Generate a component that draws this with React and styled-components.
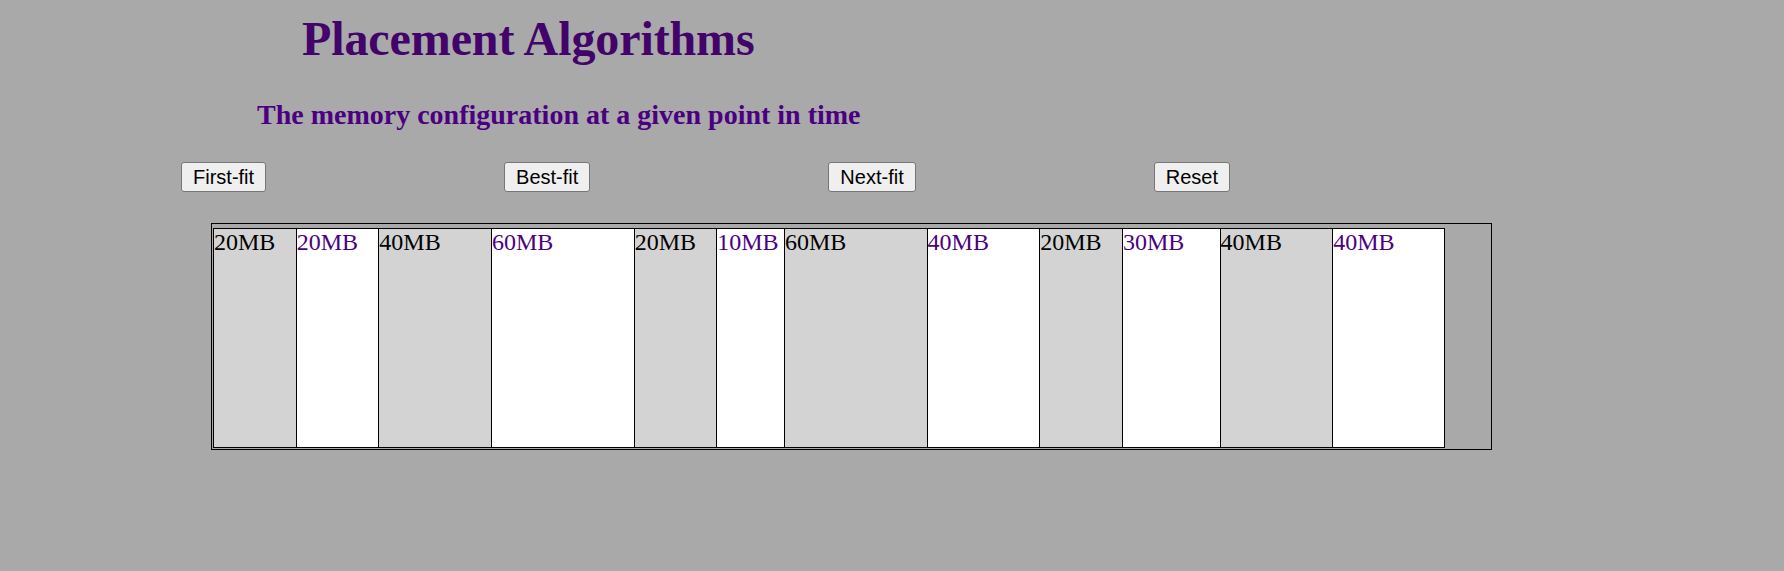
import React from 'react';
import styled, { createGlobalStyle } from 'styled-components';

const blocks = [
    { size: 20, used: true },
    { size: 20, used: false },
    { size: 40, used: true },
    { size: 60, used: false },
    { size: 20, used: true },
    { size: 10, used: false },
    { size: 60, used: true },
    { size: 40, used: false },
    { size: 20, used: true },
    { size: 30, used: false },
    { size: 40, used: true },
    { size: 40, used: false },
];

const algorithms = ['First-fit', 'Best-fit', 'Next-fit', 'Reset'];

const App = () => {
    return (
        <Wrapper>
            <GlobalStyle />
            <Title>Placement Algorithms</Title>
            <Subtitle>The memory configuration at a given point in time</Subtitle>
            <ButtonRow>
                {algorithms.map((name) => (
                    <ActionButton key={name} type="button">{name}</ActionButton>
                ))}
            </ButtonRow>
            <MemoryFrame>
                <MemoryStrip>
                    {blocks.map((block, index) => (
                        <Block key={index} $size={block.size} $used={block.used}>
                            {block.size}MB
                        </Block>
                    ))}
                </MemoryStrip>
            </MemoryFrame>
        </Wrapper>
    );
};

export default App;


const GlobalStyle = createGlobalStyle`
    html, body {
        margin: 0;
        padding: 0;
        background-color: #a9a9a9;
    }
    * {
        box-sizing: border-box;
    }
`;
const Wrapper = styled.main`
    display: flex;
    flex-direction: column;
    align-items: flex-start;
    width: 100%;
    min-height: 571px;
    padding-top: 11px;
    font-family: "Liberation Serif", "Times New Roman", serif;
    background-color: #a9a9a9;
`;
const Title = styled.h1`
    margin: 0 0 0 302px;
    font-size: 48px;
    line-height: 55px;
    font-weight: bold;
    letter-spacing: -0.1px;
    color: #42036a;
`;
const Subtitle = styled.h3`
    margin: 33px 0 0 257px;
    font-size: 28px;
    line-height: 32px;
    font-weight: bold;
    color: #4b0082;
`;
const ButtonRow = styled.div`
    display: flex;
    flex-direction: row;
    align-items: center;
    gap: 238px;
    margin: 31px 0 0 181px;
`;
const ActionButton = styled.button`
    height: 30px;
    padding: 0 11px;
    font-family: Arial, "Liberation Sans", sans-serif;
    font-size: 20px;
    color: #000;
    background-color: #efefef;
    border: 1px solid #767676;
    border-radius: 3px;
    cursor: pointer;
`;
const MemoryFrame = styled.div`
    width: 1281px;
    height: 227px;
    margin: 31px 0 0 211px;
    padding: 4px 1px 1px 1px;
    border: 1px solid #000;
`;
const MemoryStrip = styled.div`
    display: flex;
    flex-direction: row;
    height: 220px;
`;
const Block = styled.div`
    flex: 0 0 auto;
    width: ${(p) => 52.67 + p.$size * 1.5}px;
    height: 100%;
    border: 1px solid #000;
    border-right: none;
    font-size: 24px;
    line-height: 27px;
    color: ${(p) => (p.$used ? '#000' : '#4b0082')};
    background-color: ${(p) => (p.$used ? '#d3d3d3' : '#fff')};

    &:last-child {
        border-right: 1px solid #000;
    }
`;
